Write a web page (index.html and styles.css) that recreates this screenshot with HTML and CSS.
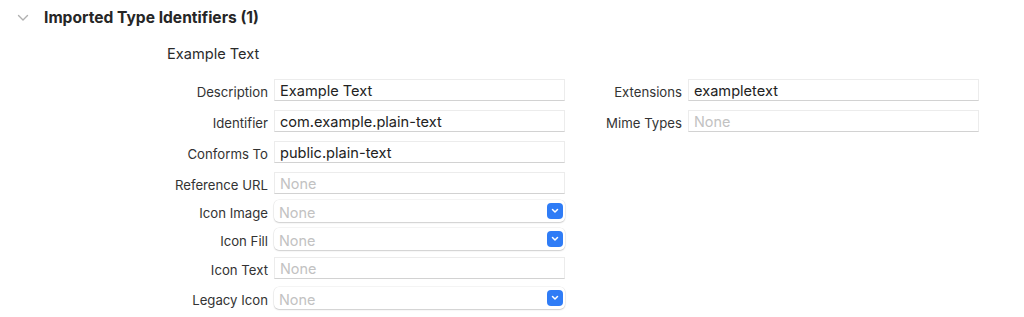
FILE: index.html
```html
<!DOCTYPE html>
<html>
<head>
<meta charset="utf-8">
<link rel="stylesheet" href="styles.css">
</head>
<body>
<div class="section-header">
  <svg class="disclosure" width="12" height="8" viewBox="0 0 12 8"><path d="M1.5 1.5 L6 6 L10.5 1.5" fill="none" stroke="#b0b0b0" stroke-width="1.4" stroke-linecap="round" stroke-linejoin="round"/></svg>
  <span class="section-title">Imported Type Identifiers (1)</span>
</div>
<div class="item-title">Example Text</div>
<div class="form">
  <div class="label r1">Description</div>
  <div class="field r1"><span class="value">Example Text</span></div>
  <div class="label r1">Extensions</div>
  <div class="field r1"><span class="value">exampletext</span></div>

  <div class="label r2">Identifier</div>
  <div class="field r2"><span class="value">com.example.plain-text</span></div>
  <div class="label r2">Mime Types</div>
  <div class="field r2"><span class="placeholder">None</span></div>

  <div class="label r3">Conforms To</div>
  <div class="field r3"><span class="value">public.plain-text</span></div>
  <div class="empty r3"></div><div class="empty r3"></div>

  <div class="label r4">Reference URL</div>
  <div class="field r4"><span class="placeholder">None</span></div>
  <div class="empty r4"></div><div class="empty r4"></div>

  <div class="label r5">Icon Image</div>
  <div class="popup r5"><span class="placeholder">None</span><span class="popup-btn"><svg width="8" height="6" viewBox="0 0 8 6"><path d="M1.5 1.5 L4 4 L6.5 1.5" fill="none" stroke="#fff" stroke-width="1.5" stroke-linecap="round" stroke-linejoin="round"/></svg></span></div>
  <div class="empty r5"></div><div class="empty r5"></div>

  <div class="label r6">Icon Fill</div>
  <div class="popup r6"><span class="placeholder">None</span><span class="popup-btn"><svg width="8" height="6" viewBox="0 0 8 6"><path d="M1.5 1.5 L4 4 L6.5 1.5" fill="none" stroke="#fff" stroke-width="1.5" stroke-linecap="round" stroke-linejoin="round"/></svg></span></div>
  <div class="empty r6"></div><div class="empty r6"></div>

  <div class="label r7">Icon Text</div>
  <div class="field r7"><span class="placeholder">None</span></div>
  <div class="empty r7"></div><div class="empty r7"></div>

  <div class="label r8">Legacy Icon</div>
  <div class="popup r8"><span class="placeholder">None</span><span class="popup-btn"><svg width="8" height="6" viewBox="0 0 8 6"><path d="M1.5 1.5 L4 4 L6.5 1.5" fill="none" stroke="#fff" stroke-width="1.5" stroke-linecap="round" stroke-linejoin="round"/></svg></span></div>
  <div class="empty r8"></div><div class="empty r8"></div>
</div>
</body>
</html>
```
FILE: styles.css
```css
html, body {
  margin: 0;
  padding: 0;
  background: #ffffff;
  font-family: Inter, "Noto Sans", "Liberation Sans", sans-serif;
  color: #2a2a2a;
  -webkit-font-smoothing: antialiased;
}

.section-header {
  display: flex;
  align-items: center;
  height: 34px;
  padding-left: 17px;
}

.disclosure {
  margin-right: 15px;
  margin-top: 1px;
}

.section-title {
  font-size: 15.6px;
  font-weight: 700;
  color: #262626;
}

.item-title {
  margin-top: 9px;
  padding-left: 167px;
  font-size: 14.6px;
  color: #2a2a2a;
  height: 22px;
  line-height: 22px;
}

.form {
  margin-top: 14px;
  display: grid;
  grid-template-columns: 108px 291px 111px 291px;
  column-gap: 6px;
  padding-left: 160px;
}

.r1, .r2, .r3 { height: 31px; }
.r4, .r5 { height: 28px; }
.r6 { height: 29px; }
.r7 { height: 30px; }
.r8 { height: 28px; }

.label {
  box-sizing: border-box;
  text-align: right;
  font-size: 13.2px;
  color: #333333;
  padding-top: 2px;
  line-height: 22px;
  white-space: nowrap;
}

.field > span {
  display: block;
  box-sizing: border-box;
  height: 22px;
  line-height: 20px;
  padding-top: 1px;
  padding-left: 5px;
  border: 1px solid #ececec;
  border-bottom: 1px solid #d2d2d2;
  background: #fff;
}

.popup {
  box-sizing: border-box;
  display: flex;
  align-items: center;
  justify-content: space-between;
  height: 22px;
  padding-left: 5px;
  padding-right: 2px;
  border-radius: 5px;
  background: #fff;
  box-shadow: 0 0 0 0.5px rgba(0,0,0,0.08), 0 1px 1.5px rgba(0,0,0,0.16);
}

.popup > .placeholder {
  padding-top: 2px;
}

.value {
  color: #222222;
  font-size: 14.6px;
}

.placeholder {
  color: #c2c2c2;
  font-size: 14.4px;
}

.popup-btn {
  width: 16px;
  height: 16px;
  border-radius: 4px;
  background: #2f7cf6;
  display: flex;
  align-items: center;
  justify-content: center;
}

.popup-btn svg { display: block; }
```
